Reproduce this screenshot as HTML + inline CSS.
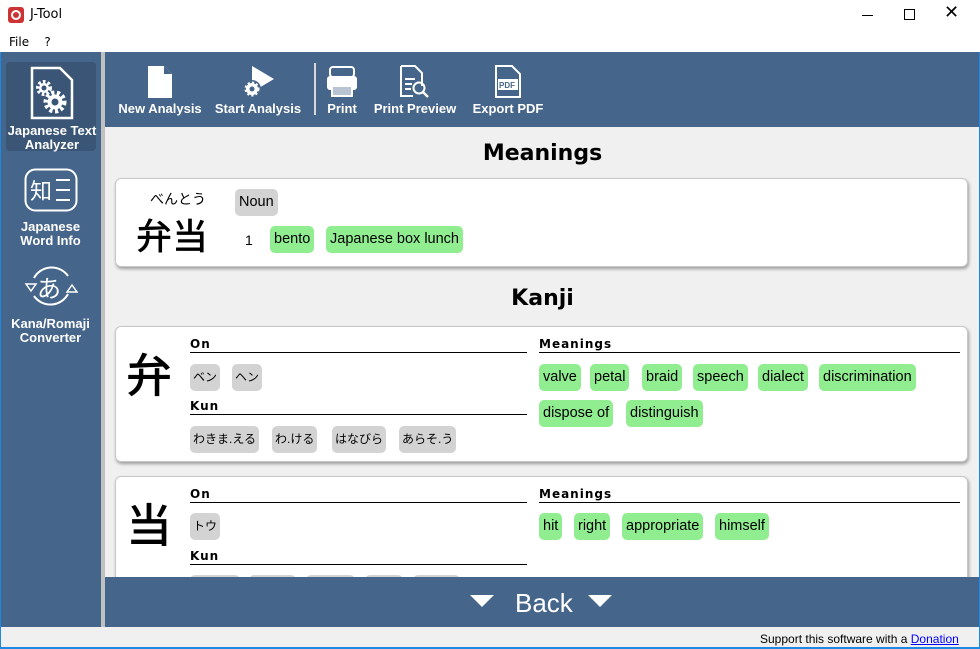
<!DOCTYPE html>
<html><head><meta charset="utf-8">
<style>
*{box-sizing:border-box;margin:0;padding:0}
body{width:980px;height:649px;position:relative;overflow:hidden;background:#fff;font-family:"Liberation Sans","Noto Sans CJK JP",sans-serif;font-size:13px;color:#000}
.abs{position:absolute;white-space:nowrap}
.tb{color:#fff;font-weight:bold;font-size:13px;text-align:center;font-family:"Liberation Sans",sans-serif}
.card{position:absolute;left:115px;width:853px;background:#fff;border:1px solid #c8c8c8;border-radius:6px;box-shadow:1px 2px 3px rgba(0,0,0,.35)}
.tag{position:absolute;height:27px;line-height:27px;border-radius:5px;padding:0 4px;font-size:14.5px;white-space:nowrap;font-family:"Liberation Sans","Noto Sans CJK JP",sans-serif}
.g{background:#90ee90}
.gr{background:#d3d3d3;font-size:12px;padding:0 3px}
.lbl{position:absolute;font-weight:bold;font-size:12px;font-family:"DejaVu Sans",sans-serif;letter-spacing:1px;border-bottom:1px solid #000;height:16px;line-height:14px}
.sb{color:#fff;font-weight:bold;font-size:13px;text-align:center;line-height:14px;font-family:"Liberation Sans",sans-serif}
.big{font-family:'Noto Sans CJK JP',sans-serif;font-weight:500}
</style></head><body>
<!-- title bar -->
<div class="abs" style="left:8px;top:7px;width:16px;height:16px;background:#c33;border-radius:3px"></div>
<div class="abs" style="left:11px;top:10px;width:10px;height:10px;border:2px solid #fff;border-radius:50%"></div>
<div class="abs" style="left:30px;top:7px;font-size:13px;font-family:'DejaVu Sans',sans-serif">J-Tool</div>
<div class="abs" style="left:862px;top:15px;width:11px;height:1px;background:#000"></div>
<div class="abs" style="left:904px;top:9px;width:11px;height:11px;border:1px solid #000"></div>
<div class="abs" style="left:944px;top:2px;font-size:18px">✕</div>
<div class="abs" style="left:9px;top:35px;font-size:12px;font-family:'DejaVu Sans',sans-serif">File&nbsp;&nbsp;&nbsp;&nbsp;?</div>
<!-- sidebar -->
<div class="abs" style="left:0;top:52px;width:101px;height:576px;background:#46658a"></div>
<div class="abs" style="left:101px;top:52px;width:4px;height:576px;background:#c0c0c0"></div>
<div class="abs" style="left:6px;top:62px;width:90px;height:89px;background:#3a5576;border-radius:4px"></div>
<svg class="abs" style="left:28px;top:66px" width="48" height="56" viewBox="0 0 48 56"><path d="M4 2h28l12 12v38H4z" fill="none" stroke="#fff" stroke-width="2.5"/><circle cx="16" cy="22" r="6" fill="none" stroke="#fff" stroke-width="4" stroke-dasharray="2.5 2"/><circle cx="16" cy="22" r="5" fill="#fff"/><circle cx="16" cy="22" r="2.5" fill="#3a5576"/><circle cx="27" cy="36" r="9" fill="none" stroke="#fff" stroke-width="5" stroke-dasharray="3 2.5"/><circle cx="27" cy="36" r="7.5" fill="#fff"/><circle cx="27" cy="36" r="3.5" fill="#3a5576"/></svg>
<div class="abs sb" style="left:2px;top:124px;width:100px">Japanese Text<br>Analyzer</div>
<svg class="abs" style="left:24px;top:168px" width="54" height="44"><rect x="1.5" y="1.5" width="51" height="41" rx="10" fill="none" stroke="#fff" stroke-width="2"/><text x="6" y="31" fill="#fff" font-size="22" font-family="Noto Sans CJK JP">知</text><path d="M32 12h14M32 22h14M32 32h14" stroke="#fff" stroke-width="2"/></svg>
<div class="abs sb" style="left:0;top:220px;width:101px">Japanese<br>Word Info</div>
<svg class="abs" style="left:24px;top:262px" width="54" height="48"><path d="M10 16A20 20 0 0 1 44 14M44 32A20 20 0 0 1 10 34" fill="none" stroke="#fff" stroke-width="2"/><text x="13" y="35" fill="#fff" font-size="24" font-family="Noto Sans CJK JP">あ</text><path d="M2 22l5 7 5-7z M43 30l5-7 5 7z" fill="none" stroke="#fff" stroke-width="1.5"/></svg>
<div class="abs sb" style="left:0;top:317px;width:101px">Kana/Romaji<br>Converter</div>
<!-- toolbar -->
<div class="abs" style="left:105px;top:52px;width:875px;height:75px;background:#46658a"></div>
<svg class="abs" style="left:147px;top:65px" width="26" height="34"><path d="M1 1h16l8 8v24H1z" fill="#fff"/><path d="M17 1v8h8" fill="#46658a"/></svg>
<div class="abs tb" style="left:113px;top:101px;width:94px">New Analysis</div>
<svg class="abs" style="left:240px;top:64px" width="36" height="36"><path d="M12 2l22 13-22 13z" fill="#fff"/><circle cx="12" cy="25" r="9" fill="#46658a"/><circle cx="12" cy="25" r="6" fill="#fff" stroke="#fff" stroke-width="3" stroke-dasharray="2 2"/><circle cx="12" cy="25" r="2.5" fill="#46658a"/></svg>
<div class="abs tb" style="left:210px;top:101px;width:96px">Start Analysis</div>
<div class="abs" style="left:314px;top:63px;width:2px;height:52px;background:#d8d8d8"></div>
<svg class="abs" style="left:326px;top:66px" width="32" height="32"><rect x="4" y="1" width="24" height="10" rx="3" fill="none" stroke="#fff" stroke-width="2"/><rect x="1" y="10" width="30" height="14" rx="3" fill="#fff"/><rect x="6" y="20" width="20" height="10" fill="#b8c4d4" stroke="#fff" stroke-width="2"/></svg>
<div class="abs tb" style="left:322px;top:101px;width:40px">Print</div>
<svg class="abs" style="left:399px;top:65px" width="32" height="34"><path d="M2 1h14l7 7v13M2 1v30h12" fill="none" stroke="#fff" stroke-width="2"/><path d="M6 14h10M6 19h7M6 24h6" stroke="#fff" stroke-width="2"/><circle cx="20" cy="23" r="5.5" fill="none" stroke="#fff" stroke-width="2"/><path d="M24 27l5 5" stroke="#fff" stroke-width="2.5"/></svg>
<div class="abs tb" style="left:370px;top:101px;width:90px">Print Preview</div>
<svg class="abs" style="left:494px;top:65px" width="28" height="34"><path d="M2 1h16l8 8v23H2z" fill="none" stroke="#fff" stroke-width="2"/><rect x="4" y="14" width="20" height="11" fill="#fff"/><text x="5" y="23" font-size="8" font-weight="bold" fill="#46658a" font-family="Liberation Sans">PDF</text></svg>
<div class="abs tb" style="left:468px;top:101px;width:80px">Export PDF</div>
<!-- content -->
<div class="abs" style="left:105px;top:127px;width:875px;height:450px;background:#f0f0f0"></div>
<div class="abs" style="left:105px;top:141px;width:875px;text-align:center;font-weight:bold;font-size:22px;font-family:'DejaVu Sans',sans-serif">Meanings</div>
<div class="card" style="top:178px;height:89px">
 <div class="abs" style="left:34px;top:10px;font-size:14px">べんとう</div>
 <div class="abs big" style="left:20px;top:30px;font-size:36px;line-height:50px">弁当</div>
 <div class="tag gr" style="left:119px;top:10px;font-size:14.5px;padding:0 4px;font-family:'Liberation Sans'">Noun</div>
 <div class="abs" style="left:129px;top:53px;font-size:14px">1</div>
 <div class="tag g" style="left:154px;top:47px">bento</div>
 <div class="tag g" style="left:210px;top:47px">Japanese box lunch</div>
</div>
<div class="abs" style="left:105px;top:286px;width:875px;text-align:center;font-weight:bold;font-size:22px;font-family:'DejaVu Sans',sans-serif">Kanji</div>
<div class="card" style="top:326px;height:136px">
 <div class="abs big" style="left:10px;top:14px;font-size:46px;line-height:64px">弁</div>
 <div class="lbl" style="left:74px;top:10px;width:337px">On</div>
 <div class="tag gr" style="left:74px;top:37px">ベン</div>
 <div class="tag gr" style="left:116px;top:37px">ヘン</div>
 <div class="lbl" style="left:74px;top:72px;width:337px">Kun</div>
 <div class="tag gr" style="left:74px;top:99px">わきま.える</div>
 <div class="tag gr" style="left:156px;top:99px">わ.ける</div>
 <div class="tag gr" style="left:216px;top:99px">はなびら</div>
 <div class="tag gr" style="left:283px;top:99px">あらそ.う</div>
 <div class="lbl" style="left:423px;top:10px;width:421px">Meanings</div>
 <div class="tag g" style="left:423px;top:37px">valve</div>
 <div class="tag g" style="left:474px;top:37px">petal</div>
 <div class="tag g" style="left:526px;top:37px">braid</div>
 <div class="tag g" style="left:577px;top:37px">speech</div>
 <div class="tag g" style="left:642px;top:37px">dialect</div>
 <div class="tag g" style="left:703px;top:37px">discrimination</div>
 <div class="tag g" style="left:423px;top:73px">dispose of</div>
 <div class="tag g" style="left:510px;top:73px">distinguish</div>
</div>
<div class="card" style="top:476px;height:140px">
 <div class="abs big" style="left:10px;top:14px;font-size:46px;line-height:64px">当</div>
 <div class="lbl" style="left:74px;top:10px;width:337px">On</div>
 <div class="tag gr" style="left:74px;top:36px">トウ</div>
 <div class="lbl" style="left:74px;top:72px;width:337px">Kun</div>
 <div class="tag gr" style="left:74px;top:98px;width:50px"></div>
 <div class="tag gr" style="left:133px;top:98px;width:47px"></div>
 <div class="tag gr" style="left:190px;top:98px;width:49px"></div>
 <div class="tag gr" style="left:249px;top:98px;width:38px"></div>
 <div class="tag gr" style="left:297px;top:98px;width:47px"></div>
 <div class="lbl" style="left:423px;top:10px;width:421px">Meanings</div>
 <div class="tag g" style="left:423px;top:36px">hit</div>
 <div class="tag g" style="left:458px;top:36px">right</div>
 <div class="tag g" style="left:506px;top:36px">appropriate</div>
 <div class="tag g" style="left:599px;top:36px">himself</div>
</div>
<!-- back bar -->
<div class="abs" style="left:105px;top:577px;width:875px;height:50px;background:#46658a"></div>
<svg class="abs" style="left:470px;top:595px" width="26" height="14"><path d="M0 0h24l-12 12z" fill="#fff"/></svg>
<div class="abs" style="left:515px;top:588px;color:#fff;font-size:26px;font-family:'Liberation Sans',sans-serif">Back</div>
<svg class="abs" style="left:588px;top:595px" width="26" height="14"><path d="M0 0h24l-12 12z" fill="#fff"/></svg>
<!-- status -->
<div class="abs" style="left:0;top:627px;width:980px;height:22px;background:#f0f0f0"></div>
<div class="abs" style="left:760px;top:632px;font-size:12px;font-family:'Liberation Sans',sans-serif">Support this software with a <span style="color:#00f;text-decoration:underline">Donation</span></div>
<div class="abs" style="left:0;top:647px;width:980px;height:2px;background:#1e88e5"></div>
<div class="abs" style="left:0;top:52px;width:1px;height:597px;background:#1e88e5"></div>
<div class="abs" style="left:979px;top:52px;width:1px;height:597px;background:#1e88e5"></div>
</body></html>
